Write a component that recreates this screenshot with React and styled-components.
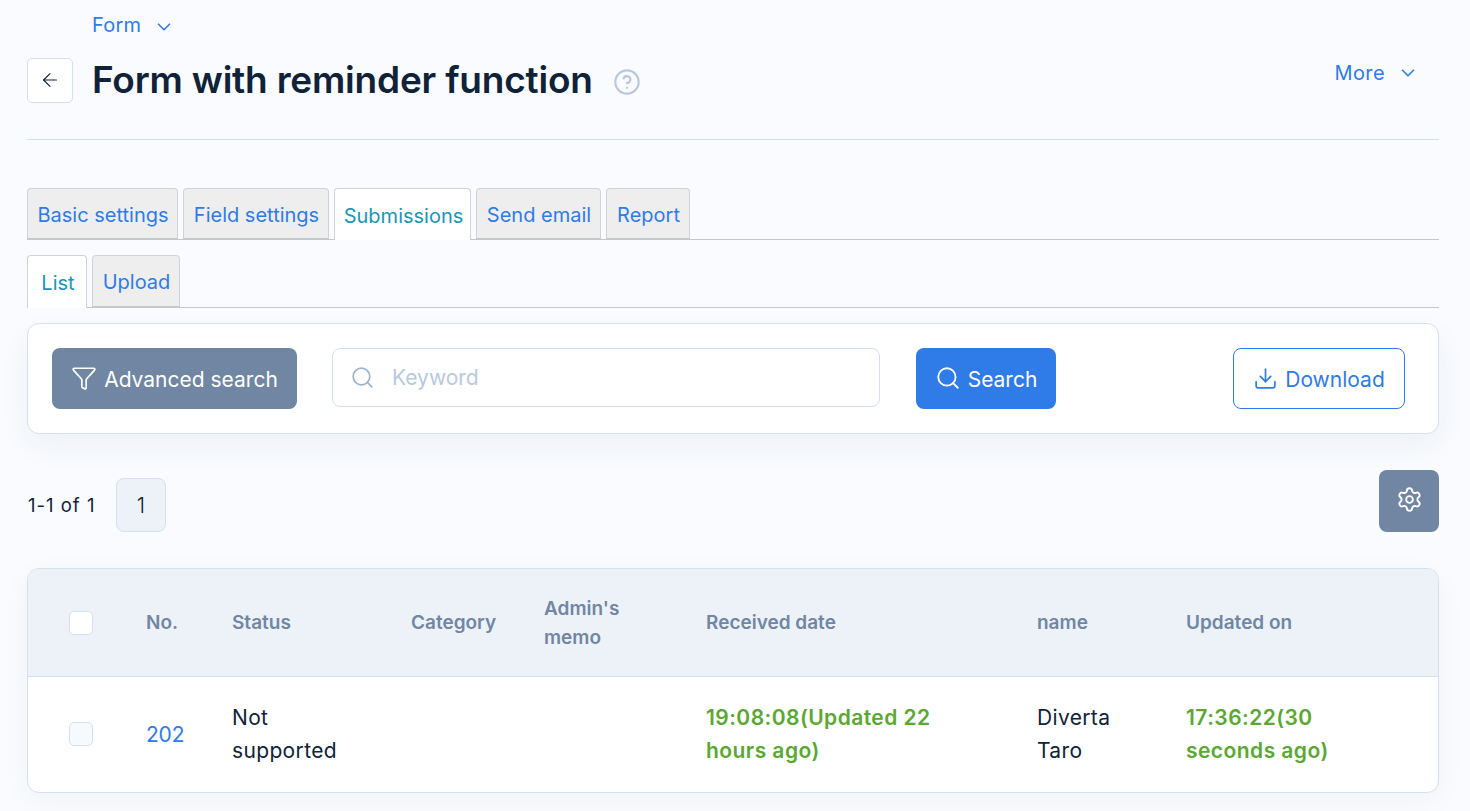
import styled, { createGlobalStyle } from 'styled-components';
import { ArrowLeft, ChevronDown, CircleHelp, Download, Filter, Search, Settings } from 'lucide-react';

const GlobalStyle = createGlobalStyle`
  html, body {
    margin: 0;
    background: #f9fbfe;
    font-family: Inter, "Noto Sans", sans-serif;
    color: #0f2238;
  }
`;

const Page = styled.div`
  padding: 0 31px 0 27px;
  height: 811px;
  overflow: hidden;
  box-sizing: border-box;
`;

const Crumb = styled.div`
  height: 50px;
  padding: 12px 0 0 65px;
  box-sizing: border-box;
  display: flex;
  align-items: flex-start;
  gap: 12px;
  color: #2f7be8;
  font-size: 20px;
  line-height: 26px;
  letter-spacing: 0.2px;
  svg { margin-top: 4px; }
`;

const Header = styled.div`
  display: flex;
  align-items: flex-start;
  height: 90px;
  padding-top: 8px;
  box-sizing: border-box;
  border-bottom: 1px solid #d5dee8;
`;

const BackButton = styled.button`
  width: 46px;
  height: 45px;
  padding: 0 0 2px;
  display: flex;
  align-items: center;
  justify-content: center;
  background: #fff;
  border: 1px solid #d3e0f0;
  border-radius: 5px;
  color: #0f2238;
`;

const Title = styled.h1`
  margin: 0 0 0 19px;
  font-size: 37px;
  line-height: 44px;
  font-weight: 600;
  letter-spacing: -0.2px;
`;

const Help = styled.span`
  margin: 10px 0 0 20px;
  display: flex;
  color: #b7c7de;
`;

const More = styled.div`
  margin: 2px 20px 0 auto;
  display: flex;
  align-items: center;
  gap: 12px;
  height: 26px;
  font-size: 20px;
  letter-spacing: 0.4px;
  color: #2f7be8;
`;

const TabRow = styled.div`
  display: flex;
  gap: 5px;
  margin-top: ${(p) => p.$top}px;
  height: ${(p) => p.$height}px;
  border-bottom: 1px solid #c4c8cd;
`;

const Tab = styled.div`
  display: flex;
  align-items: center;
  justify-content: center;
  width: ${(p) => p.$width}px;
  box-sizing: border-box;
  padding: 2px 0 0 ${(p) => (p.$active ? '2px' : '1px')};
  font-size: 20px;
  border: 1px solid #cfd2d6;
  border-bottom: ${(p) => (p.$active ? 'none' : '1px solid #c4c8cd')};
  border-radius: 4px 4px 0 0;
  background: ${(p) => (p.$active ? '#fff' : '#eeeeee')};
  color: ${(p) => (p.$active ? '#1a96b8' : '#2f7be8')};
  height: ${(p) => (p.$active ? 'calc(100% + 1px)' : '100%')};
`;

const SearchCard = styled.div`
  margin-top: 15px;
  height: 111px;
  box-sizing: border-box;
  padding: 24px 33px 0 24px;
  display: flex;
  align-items: flex-start;
  background: #fff;
  border: 1px solid #d5e0f0;
  border-radius: 12px;
  box-shadow: 0 12px 30px rgba(30, 50, 90, 0.05);
`;

const Button = styled.button`
  height: 61px;
  width: ${(p) => p.$width}px;
  margin-left: ${(p) => p.$left || '0'};
  padding: 2px 0 0;
  display: flex;
  align-items: center;
  justify-content: center;
  gap: 7px;
  box-sizing: border-box;
  border-radius: 8px;
  font-family: inherit;
  font-size: 21px;
  border: ${(p) => (p.$outline ? '1px solid #2f7be8' : 'none')};
  background: ${(p) => p.$bg};
  color: ${(p) => (p.$outline ? '#2f7be8' : '#fff')};
  svg { margin-top: -3px; }
`;

const SearchBox = styled.div`
  width: 548px;
  height: 59px;
  margin-left: 35px;
  padding-left: 17px;
  box-sizing: border-box;
  display: flex;
  align-items: center;
  gap: 17px;
  border: 1px solid #d3e0f0;
  border-radius: 8px;
  color: #9fb3cf;
`;

const Placeholder = styled.span`
  font-size: 21px;
  color: #b9c9e0;
`;

const PagerRow = styled.div`
  margin-top: 36px;
  height: 62px;
  display: flex;
  align-items: flex-start;
`;

const Count = styled.span`
  margin: 8px 19px 0 1px;
  width: 69px;
  height: 54px;
  display: flex;
  align-items: center;
  font-size: 18.5px;
  letter-spacing: 1px;
  white-space: nowrap;
`;

const PageNumber = styled.span`
  margin-top: 8px;
  width: 50px;
  height: 54px;
  box-sizing: border-box;
  display: flex;
  align-items: center;
  justify-content: center;
  background: #edf2f9;
  border: 1px solid #d3e0f0;
  border-radius: 8px;
  font-size: 21px;
  font-weight: 300;
`;

const GearButton = styled.button`
  margin-left: auto;
  width: 60px;
  height: 62px;
  padding: 0 0 3px;
  display: flex;
  align-items: center;
  justify-content: center;
  border: none;
  border-radius: 8px;
  background: #7086a3;
  color: #fff;
`;

const TableCard = styled.div`
  margin-top: 36px;
  background: #fff;
  border: 1px solid #d3e0f0;
  border-radius: 12px;
  overflow: hidden;
  box-shadow: 0 8px 30px rgba(30, 50, 90, 0.04);
`;

const Table = styled.table`
  width: 100%;
  table-layout: fixed;
  border-collapse: collapse;
`;

const Th = styled.th`
  height: 107px;
  padding: 0 8px 0 0;
  background: #edf2f9;
  border-bottom: 1px solid #d3e0f0;
  text-align: left;
  font-size: 19px;
  line-height: 29px;
  font-weight: 600;
  color: #7086a3;
`;

const Td = styled.td`
  height: 115px;
  padding: 0 12px 0 0;
  box-sizing: border-box;
  font-size: 21px;
  line-height: 33px;
  letter-spacing: ${(p) => (p.$link ? '-0.2px' : '0.35px')};
  color: ${(p) => (p.$link ? '#2f7be8' : '#0f2238')};
`;

const Fresh = styled.span`
  display: block;
  font-weight: 600;
  letter-spacing: 0.45px;
  color: #5aa832;
`;

const Check = styled.span`
  display: block;
  width: 24px;
  height: 24px;
  margin-left: 41px;
  box-sizing: border-box;
  background: ${(p) => (p.$head ? '#fff' : '#f7fafd')};
  border: 1px solid #d3e0f0;
  border-radius: 5px;
`;

const columns = [118, 86, 179, 133, 162, 331, 149, 254];

export default function App() {
  return (
    <Page>
      <GlobalStyle />
      <Crumb>
        Form
        <ChevronDown size={22} strokeWidth={1.8} />
      </Crumb>
      <Header>
        <BackButton>
          <ArrowLeft size={22} strokeWidth={1.3} />
        </BackButton>
        <Title>Form with reminder function</Title>
        <Help>
          <CircleHelp size={28} strokeWidth={1.8} />
        </Help>
        <More>
          More
          <ChevronDown size={22} strokeWidth={1.8} />
        </More>
      </Header>

      <TabRow $top={48} $height={51}>
        <Tab $width={151}>Basic settings</Tab>
        <Tab $width={146}>Field settings</Tab>
        <Tab $width={137} $active>Submissions</Tab>
        <Tab $width={125}>Send email</Tab>
        <Tab $width={84}>Report</Tab>
      </TabRow>
      <TabRow $top={15} $height={52}>
        <Tab $width={60} $active>List</Tab>
        <Tab $width={88}>Upload</Tab>
      </TabRow>

      <SearchCard>
        <Button $width={245} $bg="#7086a3">
          <Filter size={26} strokeWidth={1.6} />
          Advanced search
        </Button>
        <SearchBox>
          <Search size={25} strokeWidth={1.6} />
          <Placeholder>Keyword</Placeholder>
        </SearchBox>
        <Button $width={140} $left="36px" $bg="#2f7be8">
          <Search size={26} strokeWidth={1.7} />
          Search
        </Button>
        <Button $width={172} $left="auto" $outline $bg="#fff">
          <Download size={25} strokeWidth={1.6} />
          Download
        </Button>
      </SearchCard>

      <PagerRow>
        <Count>1-1 of 1</Count>
        <PageNumber>1</PageNumber>
        <GearButton>
          <Settings size={27} strokeWidth={1.7} />
        </GearButton>
      </PagerRow>

      <TableCard>
        <Table>
          <colgroup>
            {columns.map((w, i) => (
              <col key={i} width={w} />
            ))}
          </colgroup>
          <thead>
            <tr>
              <Th><Check $head /></Th>
              <Th>No.</Th>
              <Th>Status</Th>
              <Th>Category</Th>
              <Th>Admin's<br />memo</Th>
              <Th>Received date</Th>
              <Th>name</Th>
              <Th>Updated on</Th>
            </tr>
          </thead>
          <tbody>
            <tr>
              <Td><Check /></Td>
              <Td $link>202</Td>
              <Td>Not<br />supported</Td>
              <Td />
              <Td />
              <Td><Fresh>19:08:08(Updated 22<br />hours ago)</Fresh></Td>
              <Td>Diverta<br />Taro</Td>
              <Td><Fresh>17:36:22(30<br />seconds ago)</Fresh></Td>
            </tr>
          </tbody>
        </Table>
      </TableCard>
    </Page>
  );
}
